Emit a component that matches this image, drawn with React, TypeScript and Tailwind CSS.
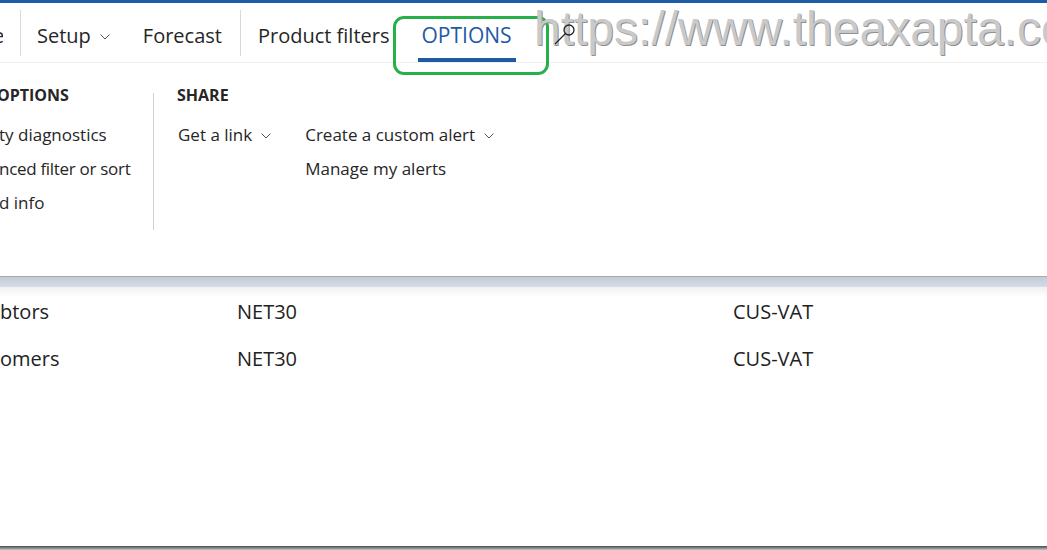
import React from "react";

function Chevron({ className = "" }: { className?: string }) {
  return (
    <svg width="10" height="6" viewBox="0 0 10 6" className={className} fill="none">
      <polyline points="0.5,0.5 5,5 9.5,0.5" stroke="#555" strokeWidth="1" />
    </svg>
  );
}

function Separator() {
  return <div className="w-px h-[46px] bg-[#d9d9d9]" />;
}

export default function App() {
  return (
    <div
      className="relative w-[1047px] h-[550px] overflow-hidden bg-white text-[#262626]"
      style={{ fontFamily: '"Open Sans", "Noto Sans", sans-serif' }}
    >
      {/* top accent */}
      <div className="h-[3px] bg-[#1d5ba6]" />

      {/* tabs */}
      <div className="h-[60px] flex items-center border-b border-[#f1f1f1] text-[20px] whitespace-nowrap">
        <span className="-ml-[7px] w-[10px] overflow-hidden pt-[6px]">e</span>
        <div className="ml-[17px]"><Separator /></div>
        <div className="ml-[16px] flex items-center gap-[9px] pt-[6px]">
          <span>Setup</span>
          <Chevron className="mt-[2px]" />
        </div>
        <span className="ml-[33px] pt-[6px]">Forecast</span>
        <div className="ml-[18px]"><Separator /></div>
        <span className="ml-[17px] pt-[6px]">Product filters</span>
        <div className="ml-[28px] relative h-full flex items-center pt-[6px]">
          <span className="text-[#1e5aa3] text-[21px] px-[4px]">OPTIONS</span>
          <div className="absolute left-0 right-0 bottom-[0px] h-[4px] bg-[#1e5aa3]" />
        </div>
      </div>

      {/* ribbon panel */}
      <div className="h-[213px] flex pt-[21px]">
        <div className="w-[156px] -ml-[3px] flex flex-col">
          <div className="text-[16px] font-bold leading-[22px]">OPTIONS</div>
          <div className="mt-[17px] flex flex-col gap-[11px] text-[17px] leading-[23px] ml-[2px]">
            <span>ty diagnostics</span>
            <span className="tracking-[-0.3px]">nced filter or sort</span>
            <span>d info</span>
          </div>
        </div>
        <div className="w-px h-[137px] mt-[9px] bg-[#d0d0d0]" />
        <div className="ml-[23px] flex flex-col">
          <div className="text-[16px] font-bold leading-[22px]">SHARE</div>
          <div className="mt-[17px] flex gap-[34px] text-[17px] leading-[23px]">
            <div className="flex items-center gap-[9px] ml-[1px] self-start">
              <span>Get a link</span>
              <Chevron className="mt-[2px]" />
            </div>
            <div className="flex flex-col gap-[11px]">
              <div className="flex items-center gap-[9px]">
                <span>Create a custom alert</span>
                <Chevron className="mt-[2px]" />
              </div>
              <span>Manage my alerts</span>
            </div>
          </div>
        </div>
      </div>

      {/* ribbon shadow */}
      <div className="h-px bg-[#a9a9a9]" />
      <div className="h-[10px] bg-gradient-to-b from-[#c2ccd7] to-[#d4dde6]" />
      <div className="h-[10px] bg-gradient-to-b from-[#f1f1f1] to-white" />

      {/* grid rows */}
      <div className="text-[20px] text-[#222]">
        <div className="h-[47px] flex items-center -mt-[9px]">
          <span className="w-[237px]">btors</span>
          <span className="w-[496px]">NET30</span>
          <span>CUS-VAT</span>
        </div>
        <div className="h-[47px] flex items-center">
          <span className="w-[237px]">omers</span>
          <span className="w-[496px]">NET30</span>
          <span>CUS-VAT</span>
        </div>
      </div>

      {/* bottom edge */}
      <div className="absolute left-0 right-0 bottom-0 h-[4px] bg-gradient-to-b from-[#4a4a4a] to-[#c8c8c8]" />

      {/* highlight box */}
      <div className="absolute left-[393px] top-[16px] w-[156px] h-[59px] border-[3px] border-[#27b04a] rounded-[11px]" />

      {/* watermark */}
      <div
        className="absolute left-[534px] top-[3px] text-[48px] leading-[52px] whitespace-nowrap text-[#c9c9c9]"
        style={{ fontFamily: '"Liberation Sans", Arial, sans-serif', textShadow: "1px 1px 0 #8f8f8f" }}
      >
        https://www.theaxapta.com
      </div>

      {/* zoom cursor */}
      <svg className="absolute left-[553px] top-[22px]" width="24" height="24" viewBox="0 0 24 24" fill="none">
        <circle cx="16" cy="8" r="5" stroke="#222" strokeWidth="1.3" fill="none" />
        <line x1="12.5" y1="11.5" x2="2" y2="22" stroke="#222" strokeWidth="1.3" />
      </svg>
    </div>
  );
}
